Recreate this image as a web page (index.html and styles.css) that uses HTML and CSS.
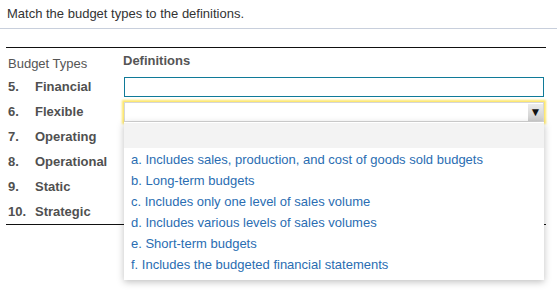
FILE: index.html
```html
<!DOCTYPE html>
<html lang="en">
<head>
    <meta charset="UTF-8">
    <title>Match the budget types</title>
    <link rel="stylesheet" href="styles.css">
</head>
<body>
    <div class="prompt">Match the budget types to the definitions.</div>

    <div class="match">
        <div class="row head">
            <div class="term types-head">Budget Types</div>
            <div class="defs-head">Definitions</div>
        </div>
        <div class="row">
            <div class="term"><span class="num">5.</span>Financial</div>
            <div class="slot"><div class="answer answer-filled"></div></div>
        </div>
        <div class="row">
            <div class="term"><span class="num">6.</span>Flexible</div>
            <div class="slot">
                <div class="answer answer-open">
                    <span class="arrow">&#9660;</span>
                </div>
            </div>
        </div>
        <div class="row">
            <div class="term"><span class="num">7.</span>Operating</div>
            <div class="slot"><div class="answer"></div></div>
        </div>
        <div class="row">
            <div class="term"><span class="num">8.</span>Operational</div>
            <div class="slot"><div class="answer"></div></div>
        </div>
        <div class="row">
            <div class="term"><span class="num">9.</span>Static</div>
            <div class="slot"><div class="answer"></div></div>
        </div>
        <div class="row">
            <div class="term"><span class="num">10.</span>Strategic</div>
            <div class="slot"><div class="answer"></div></div>
        </div>

        <ul class="options">
            <li class="blank"></li>
            <li>a. Includes sales, production, and cost of goods sold budgets</li>
            <li>b. Long-term budgets</li>
            <li>c. Includes only one level of sales volume</li>
            <li>d. Includes various levels of sales volumes</li>
            <li>e. Short-term budgets</li>
            <li>f. Includes the budgeted financial statements</li>
        </ul>
    </div>
</body>
</html>
```

FILE: styles.css
```css
html {
    height: 100%;
}

body {
    margin: 0;
    min-height: 100%;
    font-family: 'Liberation Sans', Arial, sans-serif;
    font-size: 13px;
    color: #333;
    background: #fff;
}

.prompt {
    padding: 6px 7px 0 7px;
    height: 22px;
    border-bottom: 1px solid #c8cfdc;
}

.match {
    position: relative;
    margin: 18px 0 0 6px;
    width: 540px;
    border-top: 1px solid #111;
    border-bottom: 1px solid #111;
}

.row {
    display: flex;
    align-items: center;
    height: 25px;
}

.row.head {
    height: 26px;
    align-items: flex-start;
}

.term {
    width: 116px;
    padding-left: 2px;
    font-weight: bold;
    color: #505050;
}

.types-head {
    font-weight: normal;
    color: #555;
    padding-top: 8px;
}

.defs-head {
    font-weight: bold;
    color: #555;
    padding-top: 5px;
    margin-left: -1px;
}

.num {
    display: inline-block;
    width: 27px;
}

.slot {
    flex: 1;
    padding-right: 2px;
}

.answer {
    height: 18px;
    border: 1px solid #ccc;
    background: #fff;
    position: relative;
}

.answer-filled {
    border-color: #107a98;
}

.answer-open {
    border-color: #d6d6d6;
    box-shadow: 0 0 2px 2px #fde76a;
}

.arrow {
    position: absolute;
    right: 0;
    top: 1px;
    width: 15px;
    height: 17px;
    background: linear-gradient(#ececec, #cdcdcd);
    font-size: 12px;
    line-height: 17px;
    text-align: center;
    color: #111;
}

.options {
    position: absolute;
    left: 118px;
    top: 74px;
    width: 420px;
    margin: 0;
    padding: 0 0 5px 0;
    list-style: none;
    background: #fff;
    box-shadow: 0 2px 7px rgba(0, 0, 0, 0.25);
    z-index: 2;
}

.options li {
    height: 21px;
    line-height: 21px;
    padding-left: 7px;
    color: #2a6db2;
    white-space: nowrap;
}

.options li.blank {
    height: 25px;
    margin-top: 1px;
    margin-bottom: 1px;
    background: #f3f3f3;
}
```
